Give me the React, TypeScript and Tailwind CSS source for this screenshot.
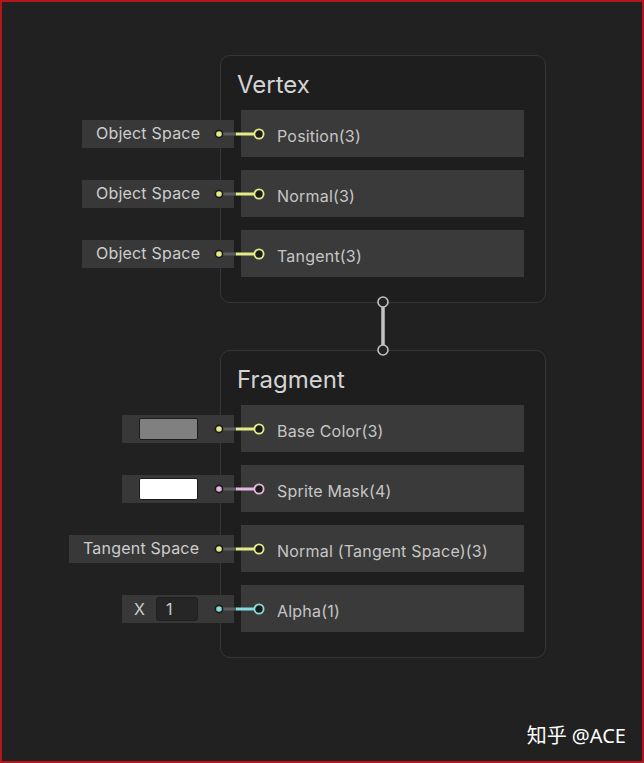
import type { ReactNode } from 'react';

type PortKind = 'vec3' | 'vec4' | 'float';

const PORT_COLOR: Record<PortKind, string> = {
  vec3: '#e3ea86',
  vec4: '#e6b6e2',
  float: '#86dcdc',
};

function Connector({ kind }: { kind: PortKind }) {
  const c = PORT_COLOR[kind];
  return (
    <svg className="absolute left-[-27px] top-1/2 -translate-y-1/2" width="54" height="14" viewBox="0 0 54 14">
      <line x1="8" y1="7" x2="23" y2="7" stroke="#5e5e5e" strokeWidth="3" />
      <line x1="22" y1="7" x2="41" y2="7" stroke={c} strokeWidth="3" />
      <circle cx="5" cy="7" r="3.6" fill={c} stroke="#1b1b1b" strokeWidth="1.6" />
      <circle cx="45" cy="7" r="4.6" fill="#1d1d1d" stroke={c} strokeWidth="1.8" />
    </svg>
  );
}

function InputBox({ width, children }: { width: string; children: ReactNode }) {
  return (
    <div className={`absolute right-full mr-[7px] top-1/2 -translate-y-1/2 h-[28px] ${width} bg-[#383838] flex items-center`}>
      {children}
    </div>
  );
}

function Slot({ label, kind, input }: { label: string; kind: PortKind; input: ReactNode }) {
  return (
    <div className="relative h-[47px] bg-[#3a3a3a] flex items-center">
      {input}
      <Connector kind={kind} />
      <span className="ml-[36px] pt-[4px] text-[16px] tracking-[0.2px] text-[#c6c6c6] leading-none">{label}</span>
    </div>
  );
}

function SpaceInput({ text, width }: { text: string; width: string }) {
  return (
    <InputBox width={width}>
      <span className="pl-[14px] pb-[2px] text-[16px] text-[#cdcdcd] leading-none tracking-[0.2px]">{text}</span>
    </InputBox>
  );
}

function ColorInput({ swatch }: { swatch: string }) {
  return (
    <InputBox width="w-[112px]">
      <div className={`ml-[17px] w-[59px] h-[22px] rounded-[2px] border border-[#1c1c1c] ${swatch}`} />
    </InputBox>
  );
}

function FloatInput() {
  return (
    <InputBox width="w-[112px]">
      <span className="pl-[12px] text-[16px] text-[#cdcdcd] leading-none">X</span>
      <div className="ml-[11px] w-[42px] h-[24px] rounded-[3px] bg-[#262626] border border-[#1f1f1f] flex items-center pl-[9px] text-[16px] text-[#cdcdcd] leading-none">
        1
      </div>
    </InputBox>
  );
}

function Node({ title, children }: { title: string; children: ReactNode }) {
  return (
    <div className="w-[326px] rounded-[10px] border border-[#363636] bg-[#1e1e1e] pt-[13px] pb-[25px] pl-[20px] pr-[21px]">
      <div className="h-[32px] leading-[32px] text-[24px] text-[#d4d4d4] -ml-[4px] mb-[9px]">{title}</div>
      <div className="flex flex-col gap-[13px]">{children}</div>
    </div>
  );
}

export default function App() {
  return (
    <div
      className="relative w-[644px] h-[763px] bg-[#212121] border-2 border-[#b3161d] pl-[218px] pt-[53px]"
      style={{ fontFamily: 'Inter, "Noto Sans", sans-serif' }}
    >
      <Node title="Vertex">
        <Slot label="Position(3)" kind="vec3" input={<SpaceInput text="Object Space" width="w-[152px]" />} />
        <Slot label="Normal(3)" kind="vec3" input={<SpaceInput text="Object Space" width="w-[152px]" />} />
        <Slot label="Tangent(3)" kind="vec3" input={<SpaceInput text="Object Space" width="w-[152px]" />} />
      </Node>

      <div className="relative h-[47px] w-[326px]">
        <svg className="absolute left-[153px] top-[-7px]" width="20" height="61" viewBox="0 0 20 61">
          <line x1="10" y1="6" x2="10" y2="54" stroke="#c4c4c4" strokeWidth="3.5" />
          <circle cx="10" cy="6" r="5" fill="#222222" stroke="#c2c2c2" strokeWidth="1.6" />
          <circle cx="10" cy="54" r="5" fill="#222222" stroke="#c2c2c2" strokeWidth="1.6" />
        </svg>
      </div>

      <Node title="Fragment">
        <Slot label="Base Color(3)" kind="vec3" input={<ColorInput swatch="bg-[#808080]" />} />
        <Slot label="Sprite Mask(4)" kind="vec4" input={<ColorInput swatch="bg-white" />} />
        <Slot
          label="Normal (Tangent Space)(3)"
          kind="vec3"
          input={<SpaceInput text="Tangent Space" width="w-[165px]" />}
        />
        <Slot label="Alpha(1)" kind="float" input={<FloatInput />} />
      </Node>

      <div
        className="absolute right-[16px] bottom-[15px] text-[20px] text-white leading-none"
        style={{ fontFamily: '"Noto Sans", "Noto Sans CJK SC", sans-serif' }}
      >
        知乎 @ACE
      </div>
    </div>
  );
}
